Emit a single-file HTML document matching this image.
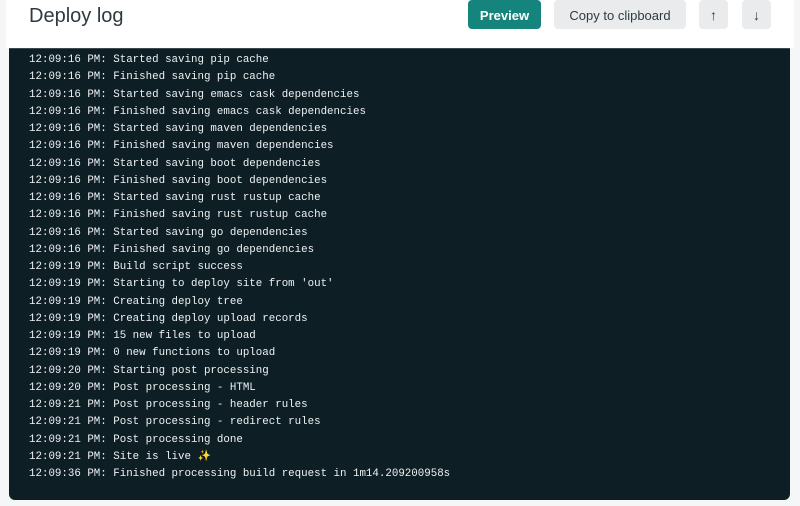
<!DOCTYPE html>
<html><head><style>
body{margin:0;width:800px;height:506px;background:#f5f6f7;font-family:"Liberation Sans",sans-serif;overflow:hidden;position:relative}
.card{position:absolute;left:6px;top:0;width:788px;height:48px;background:#fff}
h1{position:absolute;left:29px;top:5px;margin:0;font-weight:normal;font-size:20px;color:#2d3b41}
.btn{position:absolute;top:0;height:29px;font-size:13px;line-height:31px;text-align:center;color:#2d3b41;background:#e9ebed;border-radius:4px}
.log{position:absolute;left:9px;top:48px;width:781px;height:452px;background:#0e1e25;border-radius:0 0 6px 6px;border-top:1px solid #3a4a50;box-sizing:border-box}
pre{margin:0;position:absolute;left:20px;top:3px;font-family:"Liberation Mono",monospace;font-size:10.8px;line-height:17.25px;color:#eef2f3}
</style></head><body>
<div class="card"></div>
<h1>Deploy log</h1>
<div class="btn" style="left:468px;width:73px;background:#15847d;color:#fff;font-weight:bold">Preview</div>
<div class="btn" style="left:554px;width:132px">Copy to clipboard</div>
<div class="btn" style="left:699px;width:29px;font-weight:bold;font-size:14px">↑</div>
<div class="btn" style="left:742px;width:29px;font-weight:bold;font-size:14px">↓</div>
<div class="log"><pre>12:09:16 PM: Started saving pip cache
12:09:16 PM: Finished saving pip cache
12:09:16 PM: Started saving emacs cask dependencies
12:09:16 PM: Finished saving emacs cask dependencies
12:09:16 PM: Started saving maven dependencies
12:09:16 PM: Finished saving maven dependencies
12:09:16 PM: Started saving boot dependencies
12:09:16 PM: Finished saving boot dependencies
12:09:16 PM: Started saving rust rustup cache
12:09:16 PM: Finished saving rust rustup cache
12:09:16 PM: Started saving go dependencies
12:09:16 PM: Finished saving go dependencies
12:09:19 PM: Build script success
12:09:19 PM: Starting to deploy site from 'out'
12:09:19 PM: Creating deploy tree
12:09:19 PM: Creating deploy upload records
12:09:19 PM: 15 new files to upload
12:09:19 PM: 0 new functions to upload
12:09:20 PM: Starting post processing
12:09:20 PM: Post processing - HTML
12:09:21 PM: Post processing - header rules
12:09:21 PM: Post processing - redirect rules
12:09:21 PM: Post processing done
12:09:21 PM: Site is live <span style="color:#f5d000">✨</span>
12:09:36 PM: Finished processing build request in 1m14.209200958s</pre></div>
</body></html>
